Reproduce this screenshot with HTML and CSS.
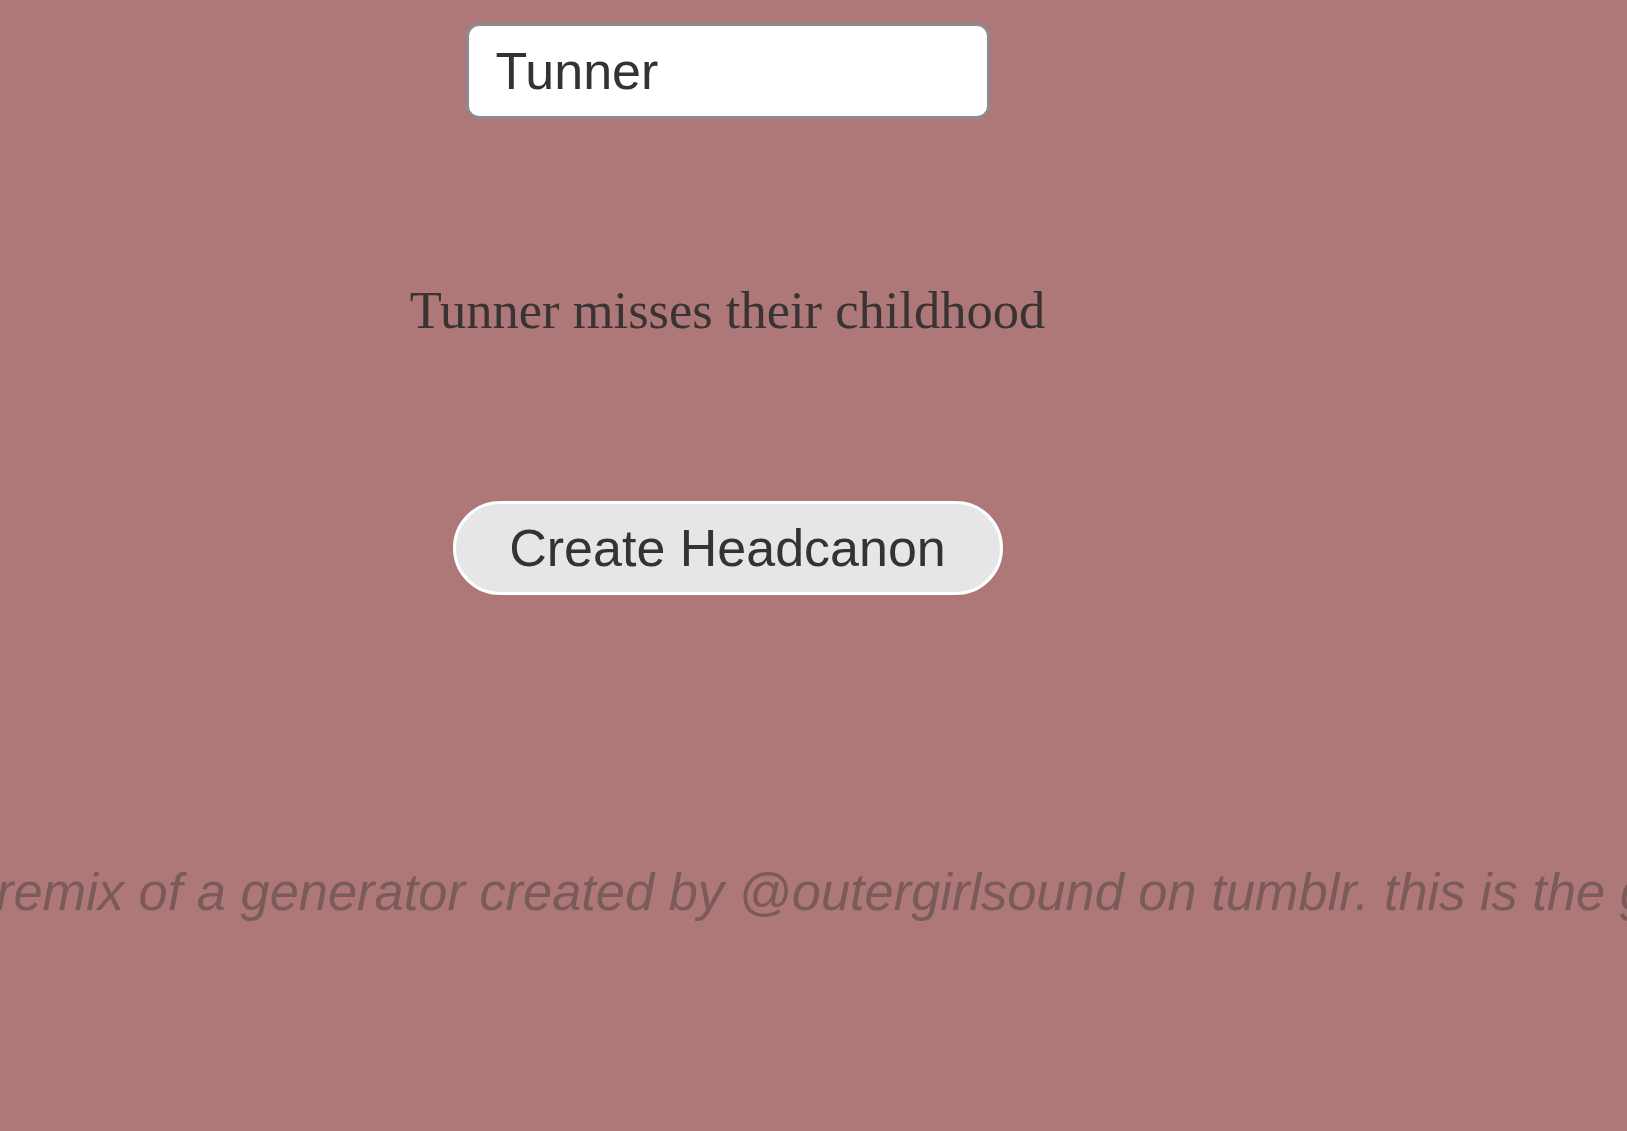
FILE: index.html
```html
<!DOCTYPE html>
<html lang="en">
<head>
<meta charset="utf-8">
<title>Headcanon Generator</title>
<link rel="stylesheet" href="styles.css">
</head>
<body>
<main class="page">
  <input class="name-input" type="text" value="Tunner">
  <p class="result">Tunner misses their childhood</p>
  <button class="create-btn" type="button">Create Headcanon</button>
</main>
<footer class="credit">
  <span class="credit-text">remix of a generator created by @outergirlsound on tumblr. this is the generator remix</span>
</footer>
</body>
</html>
```
FILE: styles.css
```css
html, body {
  margin: 0;
  padding: 0;
  background: #ad7877;
  overflow: hidden;
  height: 100%;
}

.page {
  width: 1455px;
  display: flex;
  flex-direction: column;
  align-items: center;
  padding-top: 23px;
}

.name-input {
  box-sizing: border-box;
  width: 524px;
  height: 96px;
  margin: 0;
  padding: 0 27px;
  border: 3px solid #8b8b90;
  border-radius: 13px;
  background: #ffffff;
  color: #333333;
  font-family: "Liberation Sans", Arial, sans-serif;
  font-size: 52px;
  outline: none;
}

.result {
  margin: 161px 0 0;
  font-family: "Liberation Serif", "Times New Roman", serif;
  font-size: 52.5px;
  line-height: 60px;
  color: #3a3334;
  text-align: center;
}

.create-btn {
  box-sizing: border-box;
  width: 550px;
  height: 94px;
  margin-top: 161px;
  padding: 0;
  border: 3px solid #ffffff;
  border-radius: 48px;
  background: #e6e6e8;
  color: #333333;
  font-family: "Liberation Sans", Arial, sans-serif;
  font-size: 52px;
  cursor: pointer;
}

.credit {
  margin-top: 267px;
  white-space: nowrap;
  overflow: hidden;
  width: 100%;
}

.credit-text {
  display: inline-block;
  margin-left: -4px;
  font-family: "Liberation Sans", Arial, sans-serif;
  font-style: italic;
  font-size: 52.4px;
  line-height: 60px;
  color: #7b5a5a;
}
```
